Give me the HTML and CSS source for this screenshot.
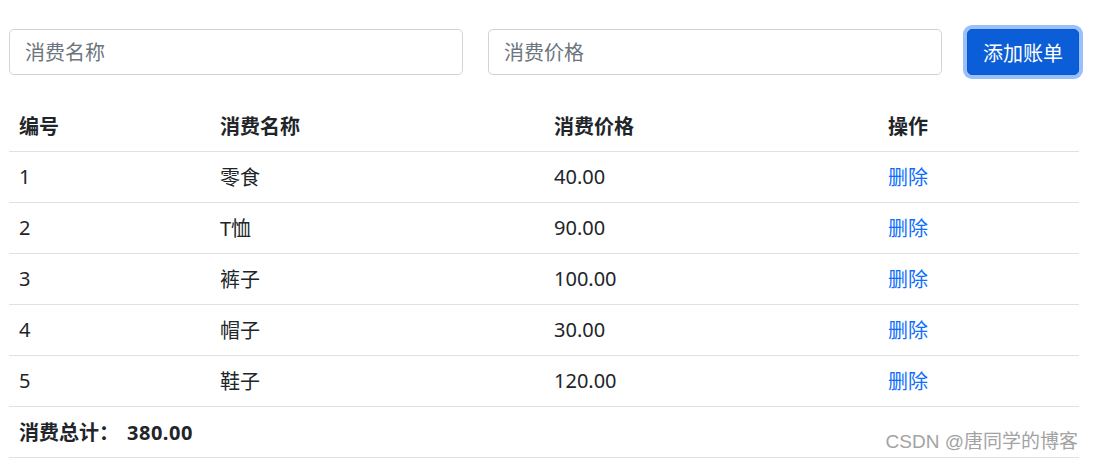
FILE: index.html
```html
<!DOCTYPE html>
<html lang="zh">
<head>
<meta charset="utf-8">
<link rel="stylesheet" href="styles.css">
</head>
<body>
<div class="container">
  <div class="form-row">
    <input class="form-control" type="text" placeholder="消费名称">
    <input class="form-control" type="text" placeholder="消费价格">
    <button class="btn">添加账单</button>
  </div>
  <table class="table">
    <colgroup>
      <col class="c1"><col class="c2"><col class="c3"><col class="c4">
    </colgroup>
    <thead>
      <tr><th>编号</th><th>消费名称</th><th>消费价格</th><th>操作</th></tr>
    </thead>
    <tbody>
      <tr><td>1</td><td>零食</td><td>40.00</td><td><a href="#">删除</a></td></tr>
      <tr><td>2</td><td>T恤</td><td>90.00</td><td><a href="#">删除</a></td></tr>
      <tr><td>3</td><td>裤子</td><td>100.00</td><td><a href="#">删除</a></td></tr>
      <tr><td>4</td><td>帽子</td><td>30.00</td><td><a href="#">删除</a></td></tr>
      <tr><td>5</td><td>鞋子</td><td>120.00</td><td><a href="#">删除</a></td></tr>
      <tr class="total-row"><td colspan="4"><span class="total-label">消费总计：</span><span class="total-value">380.00</span></td></tr>
    </tbody>
  </table>
  <div class="watermark">CSDN @唐同学的博客</div>
</div>
</body>
</html>
```
FILE: styles.css
```css
* { box-sizing: border-box; }
html, body { margin: 0; padding: 0; background: #fff; }
body {
  font-family: "Noto Sans", "Noto Sans CJK SC", sans-serif;
  font-size: 20px;
  color: #212529;
}
.container {
  position: relative;
  padding: 29px 14px 0 9px;
  width: 1093px;
}
.form-row {
  display: flex;
  gap: 25px;
  align-items: center;
  height: 46px;
}
.form-control {
  width: 454px;
  height: 46px;
  border: 1px solid #ced4da;
  border-radius: 5px;
  padding: 0 15px;
  font-family: inherit;
  font-size: 20px;
  color: #212529;
  outline: none;
}
.form-control::placeholder { color: #6c757d; }
.btn {
  width: 112px;
  height: 46px;
  background: #0b5ed7;
  color: #fff;
  border: 1px solid #0a58ca;
  border-radius: 5px;
  font-family: inherit;
  font-size: 20px;
  padding: 0;
  box-shadow: 0 0 0 4px #98c0fd;
}
.table {
  margin-top: 25px;
  width: 1070px;
  border-collapse: collapse;
  table-layout: fixed;
}
.c1 { width: 201px; }
.c2 { width: 334px; }
.c3 { width: 334px; }
.c4 { width: 201px; }
th, td {
  text-align: left;
  padding: 0 10px;
  height: 51px;
  border-bottom: 1px solid #dee2e6;
  vertical-align: middle;
  font-size: 20px;
}
th { font-weight: 700; }
a { color: #0d6efd; text-decoration: none; }
.total-row td { font-weight: 700; }
.total-label { margin-right: 8px; }
.total-value { letter-spacing: 0.5px; }
.watermark {
  position: absolute;
  right: 15px;
  bottom: 5px;
  font-size: 19px;
  color: #a3a3a3;
  font-family: "Liberation Sans", "Noto Sans CJK SC", sans-serif;
}
```
